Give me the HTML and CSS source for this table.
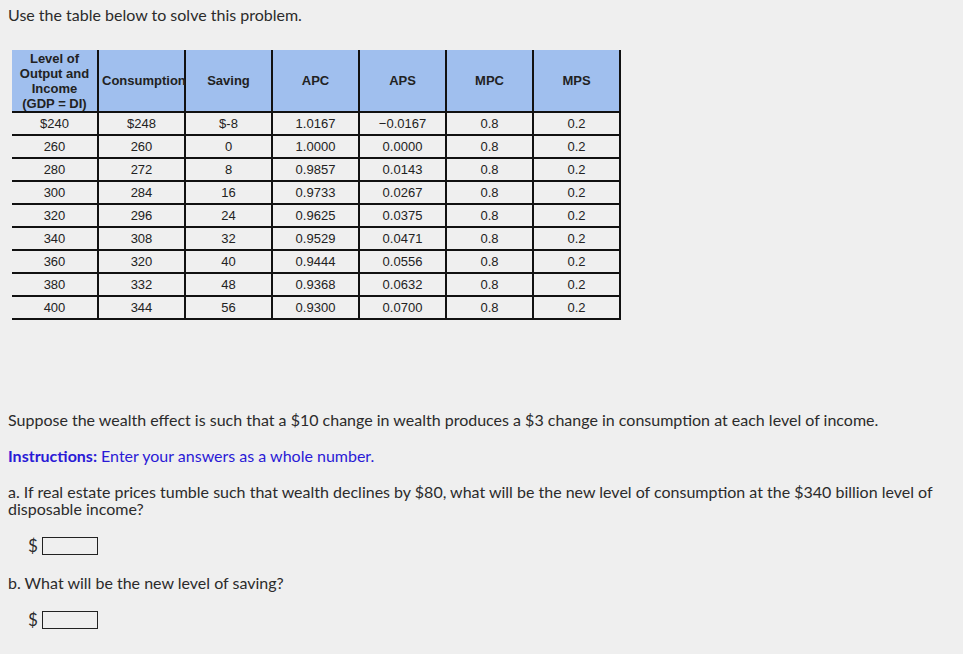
FILE: index.html
```html
<!DOCTYPE html>
<html>
<head>
<meta charset="utf-8">
<link rel="stylesheet" href="styles.css">
</head>
<body>
<p class="intro">Use the table below to solve this problem.</p>
<table class="data">
<thead>
<tr>
<th class="c1">Level of<br>Output and<br>Income<br>(GDP = DI)</th>
<th class="cons">Consumption</th>
<th>Saving</th>
<th>APC</th>
<th>APS</th>
<th>MPC</th>
<th>MPS</th>
</tr>
</thead>
<tbody>
<tr><td>$240</td><td>$248</td><td>$-8</td><td>1.0167</td><td>−0.0167</td><td>0.8</td><td>0.2</td></tr>
<tr><td>260</td><td>260</td><td>0</td><td>1.0000</td><td>0.0000</td><td>0.8</td><td>0.2</td></tr>
<tr><td>280</td><td>272</td><td>8</td><td>0.9857</td><td>0.0143</td><td>0.8</td><td>0.2</td></tr>
<tr><td>300</td><td>284</td><td>16</td><td>0.9733</td><td>0.0267</td><td>0.8</td><td>0.2</td></tr>
<tr><td>320</td><td>296</td><td>24</td><td>0.9625</td><td>0.0375</td><td>0.8</td><td>0.2</td></tr>
<tr><td>340</td><td>308</td><td>32</td><td>0.9529</td><td>0.0471</td><td>0.8</td><td>0.2</td></tr>
<tr><td>360</td><td>320</td><td>40</td><td>0.9444</td><td>0.0556</td><td>0.8</td><td>0.2</td></tr>
<tr><td>380</td><td>332</td><td>48</td><td>0.9368</td><td>0.0632</td><td>0.8</td><td>0.2</td></tr>
<tr><td>400</td><td>344</td><td>56</td><td>0.9300</td><td>0.0700</td><td>0.8</td><td>0.2</td></tr>
</tbody>
</table>
<p class="para first">Suppose the wealth effect is such that a $10 change in wealth produces a $3 change in consumption at each level of income.</p>
<p class="para instr"><b>Instructions:</b> Enter your answers as a whole number.</p>
<p class="para">a. If real estate prices tumble such that wealth declines by $80, what will be the new level of consumption at the $340 billion level of disposable income?</p>
<div class="answer"><span class="dollar">$</span><span class="box"></span></div>
<p class="para">b. What will be the new level of saving?</p>
<div class="answer"><span class="dollar">$</span><span class="box"></span></div>
</body>
</html>
```
FILE: styles.css
```css
html, body {
  background: #efefef;
}
body {
  margin: 0;
  padding: 0 8px;
  font-family: "Lato", "Open Sans", sans-serif;
  font-size: 16px;
  color: #2b2b2b;
}
.intro {
  margin: 0;
  padding-top: 6px;
  line-height: 18px;
}
.data {
  margin: 26px 0 0 4px;
  border-collapse: collapse;
  font-family: "Liberation Sans", Arial, sans-serif;
  font-size: 13px;
  color: #222;
  table-layout: fixed;
  width: 609px;
}
.data th {
  background: #a0bfee;
  font-weight: bold;
  height: 62px;
  padding: 0;
  line-height: 15px;
  width: 87px;
  border-left: 2px solid #111;
  box-sizing: border-box;
  text-align: center;
  white-space: nowrap;
}
.data th.c1 {
  border-left: none;
  width: 86px;
}
.data th.cons {
  text-align: left;
  padding-left: 3px;
}
.data th:last-child, .data td:last-child {
  border-right: 2px solid #111;
}
.data td {
  height: 23px;
  padding: 0;
  text-align: center;
  border-left: 2px solid #111;
  border-top: 2px solid #111;
  box-sizing: border-box;
}
.data td:first-child {
  border-left: none;
}
.data tbody tr:last-child td {
  border-bottom: 2px solid #111;
}
.para {
  margin: 0 0 19px 0;
  line-height: 17px;
}
.para.first {
  margin-top: 91px;
}
.instr {
  color: #2a1ad6;
}
.instr b {
  font-weight: bold;
}
.answer {
  display: flex;
  align-items: center;
  padding-left: 20px;
  margin: 0 0 19px 0;
  height: 19px;
}
.dollar {
  font-size: 17px;
  margin-right: 4px;
}
.box {
  display: inline-block;
  width: 54px;
  height: 16px;
  border: 1px solid #222;
  background: transparent;
}
```
